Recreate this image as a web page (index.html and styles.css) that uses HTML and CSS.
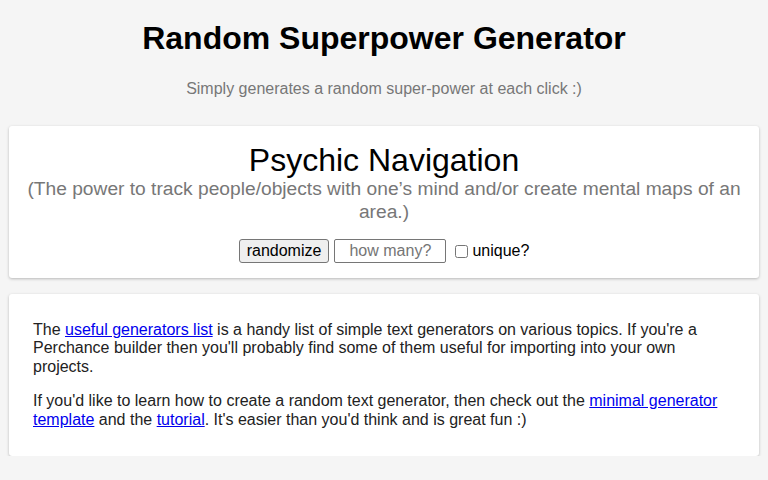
FILE: index.html
```html
<!DOCTYPE html>
<html>
<head>
<meta charset="utf-8">
<link rel="stylesheet" href="styles.css">
</head>
<body>
<h1 class="title">Random Superpower Generator</h1>
<p class="subtitle">Simply generates a random super-power at each click :)</p>
<div class="card result-card">
  <div class="power-name">Psychic Navigation</div>
  <div class="power-desc">(The power to track people/objects with one’s mind and/or create mental maps of an area.)</div>
  <div class="controls">
    <button class="btn">randomize</button>
    <input class="count" type="text" placeholder="how many?">
    <label class="unique"><input type="checkbox" class="check">unique?</label>
  </div>
</div>
<div class="card info-card">
  <p>The <a href="#">useful generators list</a> is a handy list of simple text generators on various topics. If you're a Perchance builder then you'll probably find some of them useful for importing into your own projects.</p>
  <p>If you'd like to learn how to create a random text generator, then check out the <a href="#">minimal generator template</a> and the <a href="#">tutorial</a>. It's easier than you'd think and is great fun :)</p>
</div>
</body>
</html>
```
FILE: styles.css
```css
html, body {
  margin: 0;
  padding: 0;
  background: #f5f5f5;
  font-family: "Liberation Sans", Arial, sans-serif;
  color: #000;
}
body {
  padding: 0 9px;
}
.title {
  margin: 20px 0 0;
  font-size: 32px;
  line-height: 37px;
  font-weight: bold;
  text-align: center;
}
.subtitle {
  margin: 23px 0 0;
  font-size: 16px;
  line-height: 18px;
  color: #777;
  text-align: center;
}
.card {
  background: #fff;
  border-radius: 3px;
  box-shadow: 0 1px 3px rgba(0,0,0,0.25);
}
.result-card {
  margin-top: 28px;
  padding: 16px 16px 15px;
  text-align: center;
}
.power-name {
  font-size: 32px;
  line-height: 37px;
}
.power-desc {
  margin-top: -2px;
  font-size: 19.2px;
  line-height: 23px;
  color: #777;
}
.controls {
  margin-top: 16px;
  display: flex;
  justify-content: center;
  align-items: center;
  gap: 5px;
}
.btn {
  font-family: "Liberation Sans", Arial, sans-serif;
  font-size: 16px;
  height: 24px;
  padding: 0 7px;
  background: #efefef;
  border: 1px solid #767676;
  border-radius: 3px;
  color: #000;
}
.count {
  font-family: "Liberation Sans", Arial, sans-serif;
  font-size: 16px;
  width: 112px;
  height: 24px;
  box-sizing: border-box;
  border: 1px solid #767676;
  border-radius: 2px;
  text-align: center;
  padding: 0 4px;
}
.count::placeholder {
  color: #757575;
}
.unique {
  display: flex;
  align-items: center;
  font-size: 16px;
  margin-left: 4px;
}
.check {
  width: 13px;
  height: 13px;
  margin: 0 4px 0 0;
}
.info-card {
  margin-top: 16px;
  padding: 11px 24px;
  font-size: 16px;
  line-height: 18.4px;
  color: #222;
}
.info-card p {
  margin: 16px 0;
}
.info-card a {
  color: #0000ee;
}
```
